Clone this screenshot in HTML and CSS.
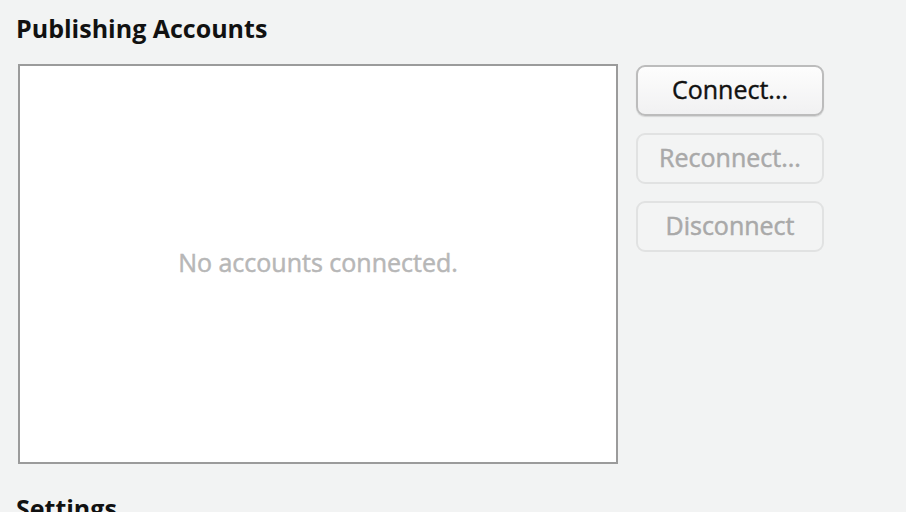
FILE: index.html
```html
<!DOCTYPE html>
<html>
<head>
<meta charset="utf-8">
<link rel="stylesheet" href="styles.css">
</head>
<body>
<div class="page">
  <h1 class="section-title">Publishing Accounts</h1>
  <div class="accounts">
    <div class="list-box">
      <span class="empty">No accounts connected.</span>
    </div>
    <div class="actions">
      <button class="btn">Connect...</button>
      <button class="btn" disabled>Reconnect...</button>
      <button class="btn" disabled>Disconnect</button>
    </div>
  </div>
  <h1 class="section-title settings">Settings</h1>
</div>
</body>
</html>
```
FILE: styles.css
```css
html, body {
  margin: 0;
  padding: 0;
  background: #f2f3f3;
  overflow: hidden;
}
.page {
  padding: 11px 0 0 17px;
  font-family: "Open Sans", "DejaVu Sans", sans-serif;
}
.section-title {
  margin: 0;
  font-size: 25px;
  line-height: 34px;
  font-weight: 700;
  color: #111;
  margin-left: -1px;
}
.accounts {
  display: flex;
  align-items: flex-start;
  gap: 18px;
  margin-top: 19px;
  margin-left: 1px;
}
.list-box {
  box-sizing: border-box;
  width: 600px;
  height: 400px;
  border: 2px solid #9b9b9b;
  background: #fff;
  display: flex;
  align-items: center;
  justify-content: center;
}
.empty {
  font-size: 25px;
  font-weight: 400;
  -webkit-text-stroke: 0.5px #b7b7b7;
  color: #b7b7b7;
  margin-top: -5px;
}
.actions {
  display: flex;
  flex-direction: column;
  gap: 17px;
  padding-top: 1px;
}
.btn {
  box-sizing: border-box;
  width: 188px;
  height: 51px;
  border-radius: 9px;
  border: 2px solid #bcbcbc;
  background: linear-gradient(#fdfdfd, #f1f1f2);
  box-shadow: 0 1px 1px rgba(0,0,0,0.12);
  font-family: "Open Sans", "DejaVu Sans", sans-serif;
  font-size: 25px;
  font-weight: 400;
  -webkit-text-stroke: 0.4px #111;
  color: #111;
  padding: 0 0 4px 0;
}
.btn:disabled {
  border-color: #e1e2e2;
  background: #f3f4f4;
  box-shadow: none;
  color: #a9a9a9;
  -webkit-text-stroke: 0.5px #a9a9a9;
}
.settings {
  margin-top: 27px;
}
```
